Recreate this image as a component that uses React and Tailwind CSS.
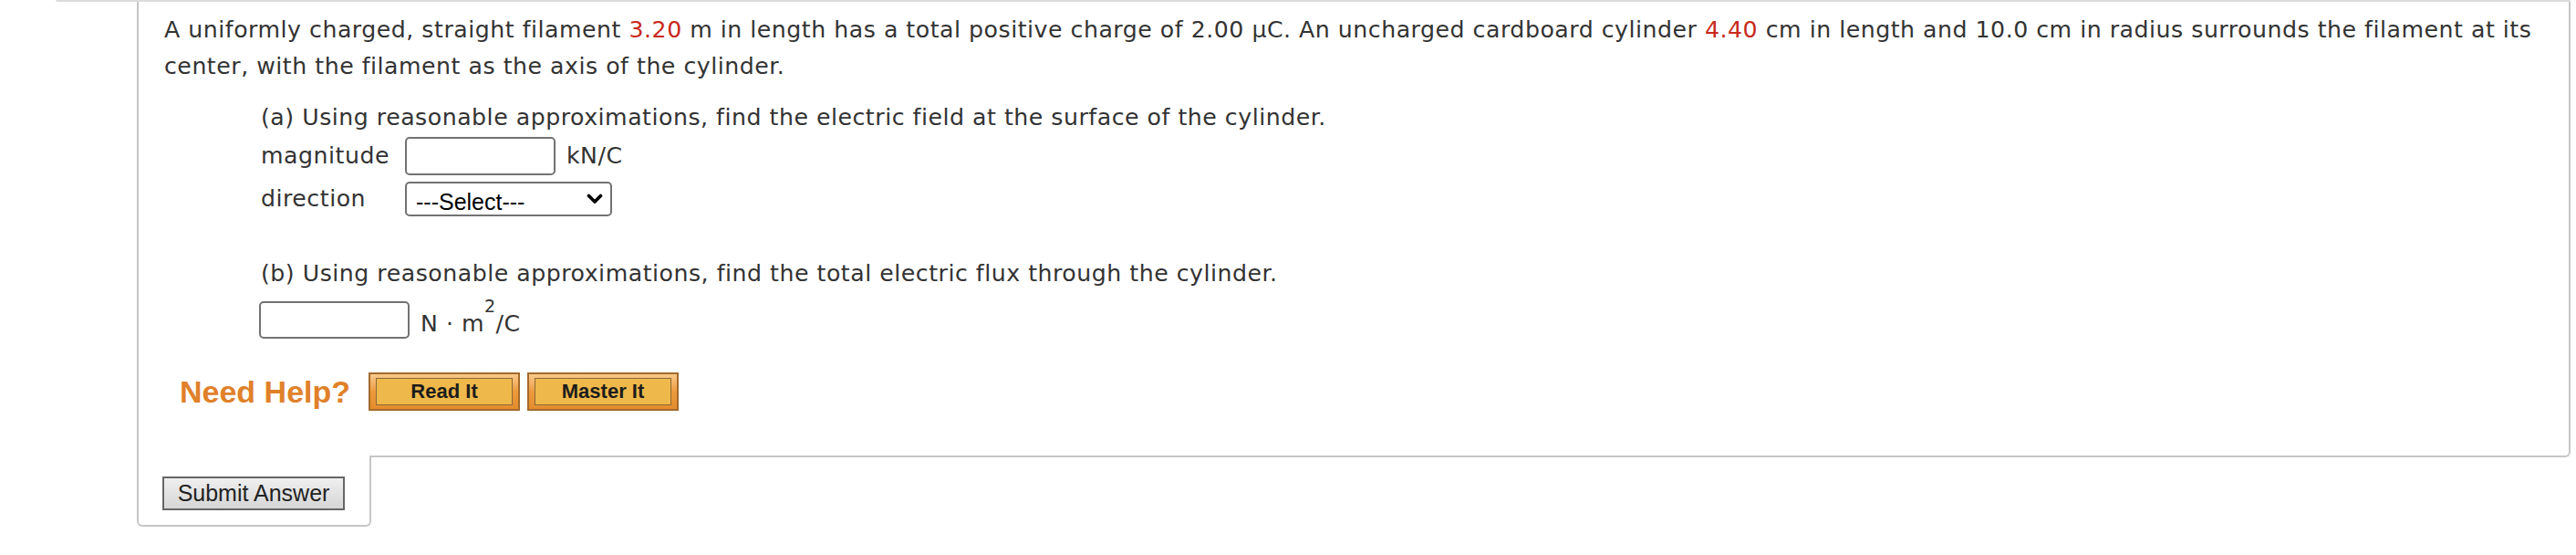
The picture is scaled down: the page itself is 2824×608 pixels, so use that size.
import React from 'react';

// question body + help buttons + submit tab, scaled 1.8x
const Num = ({ children }) => <span className="text-[#c8291c]">{children}</span>;

function HelpButton({ label }) {
  return (
    <button className="w-[166px] h-[42px] border-2 border-[#a36a2c] bg-linear-to-b from-[#f8c98a] via-[#ec9a3c] to-[#e58c2c] px-[6px] py-[4px]">
      <div className="h-full border border-[#8c6a36] bg-[#efb84a] flex items-center justify-center font-['Liberation_Sans',Arial,sans-serif] font-bold text-[22px] leading-none text-[#1c1c1c]">
        {label}
      </div>
    </button>
  );
}

export default function App() {
  return (
    <div className="w-[2824px] h-[608px] bg-white font-['DejaVu_Sans',Verdana,sans-serif] text-[#333]">
      <div className="ml-[61px] w-[2757px] h-[2px] bg-[#dcdcdc] rounded-bl-[2px]" />

      <div className="ml-[150px] w-[2668px]">
        <div className="h-[499px] border-x-2 border-b-2 border-[#c6c6c6] rounded-br-[6px] px-[28px] pt-[11px] text-[25.2px] leading-[40px] tracking-[0.52px]">
          <p>
            A uniformly charged, straight filament <Num>3.20</Num> m in length has a total positive charge of 2.00 µC. An
            uncharged cardboard cylinder <Num>4.40</Num> cm in length and 10.0 cm in radius surrounds the filament at its
            center, with the filament as the axis of the cylinder.
          </p>

          <div className="pl-[106px] mt-[16px]">
            <p>(a) Using reasonable approximations, find the electric field at the surface of the cylinder.</p>

            <div className="mt-[1px] grid grid-cols-[158px_auto] gap-y-[6px] items-center w-max">
              <span>magnitude</span>
              <div className="flex items-center gap-[12px]">
                <input className="w-[165px] h-[42px] border-2 border-[#727272] rounded-[5px] bg-white" />
                <span>kN/C</span>
              </div>
              <span>direction</span>
              <div className="relative w-[227px] h-[38px]">
                <select className="appearance-none w-full h-full border-2 border-[#727272] rounded-[5px] bg-white pl-[10px] font-['Liberation_Sans',Arial,sans-serif] text-[25px] tracking-normal text-black">
                  <option>---Select---</option>
                  <option>radially inward</option>
                  <option>radially outward</option>
                </select>
                <svg className="absolute right-[10px] top-[13px] pointer-events-none" width="18" height="12" viewBox="0 0 18 12">
                  <path d="M2.5 2.5 L9 9 L15.5 2.5" fill="none" stroke="#000" strokeWidth="3.6" strokeLinecap="round" strokeLinejoin="round" />
                </svg>
              </div>
            </div>

            <p className="mt-[42px]">(b) Using reasonable approximations, find the total electric flux through the cylinder.</p>

            <div className="mt-[10px] h-[41px] flex items-start gap-[12px] -ml-[2px]">
              <input className="w-[165px] h-[41px] border-2 border-[#727272] rounded-[5px] bg-white" />
              <span className="mt-[5px]">
                N · m<sup className="text-[19px] -top-[21px] leading-none">2</sup>/C
              </span>
            </div>
          </div>

          <div className="mt-[37px] ml-[17px] flex items-center">
            <span className="font-['Liberation_Sans',Arial,sans-serif] font-bold text-[34px] tracking-normal leading-none text-[#e0812a] mr-[20px]">
              Need Help?
            </span>
            <div className="flex gap-[8px] tracking-normal">
              <HelpButton label="Read It" />
              <HelpButton label="Master It" />
            </div>
          </div>
        </div>

        <div className="relative -mt-[2px] w-[257px] h-[78px] bg-white border-x-2 border-b-2 border-[#c6c6c6] rounded-b-[6px] pl-[26px] pt-[23px]">
          <button className="w-[200px] h-[37px] border-2 border-[#666] bg-linear-to-b from-[#efefef] to-[#d6d6d6] font-['Liberation_Sans',Arial,sans-serif] text-[25px] leading-none text-[#222]">
            Submit Answer
          </button>
        </div>
      </div>
    </div>
  );
}
